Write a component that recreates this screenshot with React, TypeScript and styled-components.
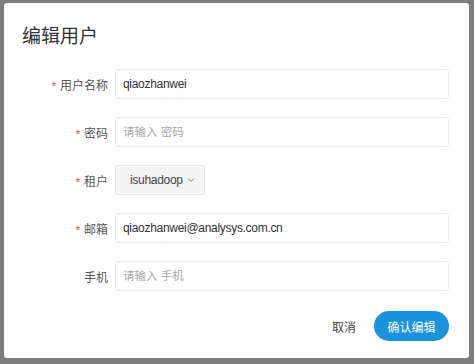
import styled, { createGlobalStyle } from 'styled-components';

const GlobalStyle = createGlobalStyle`
  html, body {
    margin: 0;
    padding: 0;
    background: #7d7d7d;
  }
  body {
    font-family: "Liberation Sans", "Noto Sans CJK SC", sans-serif;
  }
`;

const Backdrop = styled.div`
  width: 474px;
  height: 364px;
  box-sizing: border-box;
  padding: 3px 5px 6px 4px;
  background: #7d7d7d;
`;

const Modal = styled.div`
  width: 465px;
  height: 355px;
  box-sizing: border-box;
  background: #fff;
  border-radius: 3px;
  padding: 20px 20px 16px 0;
  display: flex;
  flex-direction: column;
`;

const Title = styled.h2`
  margin: 0 0 18px 18px;
  font-size: 19px;
  line-height: 28px;
  font-weight: 400;
  color: #333;
`;

const Form = styled.div`
  display: flex;
  flex-direction: column;
  gap: 18px;
`;

const Row = styled.div`
  display: grid;
  grid-template-columns: 104px 1fr;
  column-gap: 7px;
  align-items: center;
  justify-items: start;
  height: 30px;
`;

const Label = styled.label`
  justify-self: end;
  font-size: 12px;
  color: #555;
`;

const Star = styled.span`
  color: #e4393c;
  margin-right: 4px;
  font-size: 11px;
`;

const Input = styled.input`
  justify-self: stretch;
  height: 30px;
  box-sizing: border-box;
  border: 1px solid #ebebeb;
  border-radius: 3px;
  padding: 0 7px;
  font-family: inherit;
  font-size: 12px;
  letter-spacing: -0.3px;
  color: #333;
  outline: none;
  background: #fff;
  &::placeholder {
    color: #a8a8a8;
    font-size: 11.5px;
    letter-spacing: 0;
  }
`;

const Select = styled.div`
  height: 30px;
  box-sizing: border-box;
  border: 1px solid #e6e6e6;
  border-radius: 3px;
  background: #f4f4f4;
  display: flex;
  align-items: center;
  gap: 4px;
  padding: 0 9px 0 14px;
  font-size: 12px;
  letter-spacing: -0.3px;
  color: #444;
`;

const Footer = styled.div`
  margin-top: 20px;
  display: flex;
  justify-content: flex-end;
  align-items: center;
  gap: 12px;
`;

const CancelButton = styled.button`
  border: none;
  background: none;
  font-family: inherit;
  font-size: 12px;
  color: #444;
  padding: 0 6px;
  height: 30px;
`;

const PrimaryButton = styled.button`
  border: none;
  background: #1b93dc;
  color: #fff;
  font-family: inherit;
  font-size: 12px;
  height: 30px;
  width: 75px;
  border-radius: 15px;
`;

const Chevron = () => (
  <svg width="8" height="6" viewBox="0 0 8 6" fill="none">
    <path d="M1 1.5 L4 4.5 L7 1.5" stroke="#777" strokeWidth="1" />
  </svg>
);

export default function App() {
  return (
    <>
      <GlobalStyle />
      <Backdrop>
        <Modal>
          <Title>编辑用户</Title>
          <Form>
            <Row>
              <Label><Star>*</Star>用户名称</Label>
              <Input defaultValue="qiaozhanwei" />
            </Row>
            <Row>
              <Label><Star>*</Star>密码</Label>
              <Input placeholder="请输入 密码" />
            </Row>
            <Row>
              <Label><Star>*</Star>租户</Label>
              <Select>
                isuhadoop
                <Chevron />
              </Select>
            </Row>
            <Row>
              <Label><Star>*</Star>邮箱</Label>
              <Input defaultValue="qiaozhanwei@analysys.com.cn" />
            </Row>
            <Row>
              <Label>手机</Label>
              <Input placeholder="请输入 手机" />
            </Row>
          </Form>
          <Footer>
            <CancelButton>取消</CancelButton>
            <PrimaryButton>确认编辑</PrimaryButton>
          </Footer>
        </Modal>
      </Backdrop>
    </>
  );
}
